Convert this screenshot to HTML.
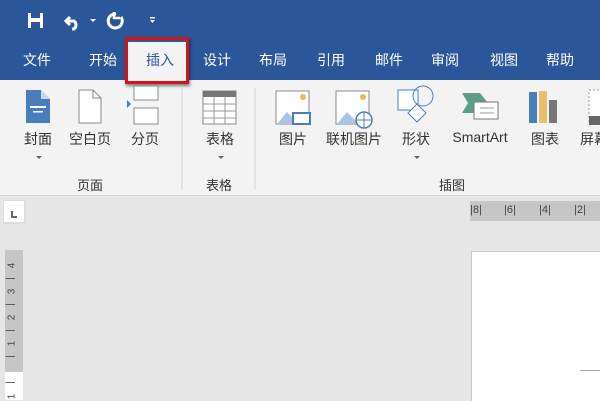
<!DOCTYPE html><html><head><meta charset="utf-8"><style>
body{margin:0;width:600px;height:400px;overflow:hidden;position:relative;background:#e6e6e6;font-family:"Liberation Sans","Noto Sans CJK SC",sans-serif}
.a{position:absolute}
.tab{position:absolute;top:50px;color:#fff;font-size:14px;transform:translateX(-50%);white-space:nowrap}
.lbl{position:absolute;top:129px;font-size:14px;color:#333;transform:translateX(-50%);white-space:nowrap}
.g{position:absolute;top:175px;font-size:13px;color:#333;transform:translateX(-50%)}
.arr{position:absolute;top:156px;width:0;height:0;border-left:3px solid transparent;border-right:3px solid transparent;border-top:3px solid #666;transform:translateX(-50%)}
.rn{position:absolute;font-size:11px;color:#444}
.vn{position:absolute;left:9px;font-size:10px;color:#444;transform:rotate(-90deg)}
</style></head><body>
<div class="a" style="left:0;top:0;width:600px;height:80px;background:#2b579a"></div>
<svg class="a" style="left:0;top:0" width="170" height="40">
<rect x="28" y="13" width="15" height="15" fill="#fff"/><rect x="31" y="13" width="9" height="5" fill="#2b579a"/><rect x="31" y="22" width="9" height="6" fill="#2b579a"/>
<path d="M70 17 l-4 4 l4 4 M66 21 h8 a5 5 0 0 1 0 8 h-2" stroke="#fff" stroke-width="3" fill="none"/>
<path d="M90 19 l3 3 l3-3z" fill="#fff"/>
<path d="M116 14 a7 7 0 1 0 5 3" stroke="#fff" stroke-width="3" fill="none"/><path d="M114 12 v6 h6" stroke="#fff" stroke-width="2.5" fill="none"/>
<rect x="150" y="17" width="5" height="1.5" fill="#fff"/><path d="M150 20 l2.5 3 l2.5-3z" fill="#fff"/>
</svg>
<div class="a" style="left:0;top:80px;width:600px;height:115px;background:#f3f3f3;border-bottom:1px solid #d6d6d6"></div>
<div class="a" style="left:128px;top:42px;width:58px;height:40px;background:#f3f3f3"></div>
<div class="a" style="left:125px;top:37px;width:58px;height:41px;border:3px solid #d3141b;box-shadow:1px 2px 3px rgba(0,0,0,.5)"></div>
<span class="tab" style="left:37px">文件</span><span class="tab" style="left:103px">开始</span><span class="tab" style="left:160px;color:#2b579a">插入</span><span class="tab" style="left:217px">设计</span><span class="tab" style="left:273px">布局</span><span class="tab" style="left:331px">引用</span><span class="tab" style="left:389px">邮件</span><span class="tab" style="left:445px">审阅</span><span class="tab" style="left:504px">视图</span><span class="tab" style="left:560px">帮助</span>
<svg class="a" style="left:0;top:80px" width="600" height="115">
<path d="M26 10 h15 l9 9 v24 h-24z" fill="#4a7ebb"/><path d="M41 10 v9 h9z" fill="#c8d8ec"/><rect x="30" y="26" width="16" height="2" fill="#fff"/><rect x="33" y="31" width="10" height="1.5" fill="#fff"/>
<path d="M79 10 h14 l8 8 v25 h-22z" fill="#fff" stroke="#888"/><path d="M93 10 v8 h8" fill="none" stroke="#888"/>
<rect x="134" y="6" width="24" height="14" fill="#fff" stroke="#888"/><rect x="134" y="28" width="24" height="16" fill="#fff" stroke="#888"/><path d="M127 20 l4 4 l-4 4z" fill="#4a7ebb"/>
<rect x="203" y="11" width="33" height="33" fill="#fff" stroke="#888"/><rect x="203" y="11" width="33" height="6" fill="#777"/>
<path d="M203 24 h33 M203 31 h33 M203 38 h33 M214 17 v27 M225 17 v27" stroke="#999"/>
<line x1="182" y1="8" x2="182" y2="110" stroke="#d4d4d4"/><line x1="255" y1="8" x2="255" y2="110" stroke="#d4d4d4"/>
<rect x="276" y="11" width="33" height="33" fill="#fff" stroke="#888"/><path d="M277 44 l10-12 l8 8 l14 -8 v12z" fill="#a9c4e4"/><circle cx="303" cy="17" r="3" fill="#e8b960"/><rect x="293" y="33" width="17" height="11" fill="#fff" stroke="#4a7ebb" stroke-width="2"/>
<rect x="336" y="11" width="33" height="33" fill="#fff" stroke="#888"/><path d="M337 44 l10-12 l8 8 l14 -8 v12z" fill="#a9c4e4"/><circle cx="363" cy="17" r="3" fill="#e8b960"/><circle cx="364" cy="40" r="8" fill="#fff" stroke="#4a7ebb" stroke-width="1.5"/><path d="M356 40 h16 M364 32 v16" stroke="#4a7ebb"/>
<rect x="398" y="10" width="20" height="20" fill="#fff" stroke="#4a7ebb"/><circle cx="423" cy="16" r="10" fill="none" stroke="#4a7ebb"/><path d="M408 33 l9-9 l9 9 l-9 9z" fill="#fff" stroke="#4a7ebb"/>
<path d="M462 13 h18 l8 10 l-8 10 h-18 l6-10z" fill="#5b9f8a"/><rect x="474" y="22" width="24" height="17" fill="#fff" stroke="#777"/><path d="M480 28 h14 M480 33 h14" stroke="#999"/>
<rect x="529" y="12" width="8" height="31" fill="#4a7ebb"/><rect x="539" y="11" width="8" height="32" fill="#e8c06c"/><rect x="549" y="20" width="8" height="23" fill="#777"/>
<rect x="589" y="10" width="14" height="34" fill="#fff" stroke="#999" stroke-dasharray="2 2"/><rect x="589" y="36" width="12" height="9" fill="#666"/>
</svg>
<span class="lbl" style="left:38px">封面</span><span class="lbl" style="left:90px">空白页</span><span class="lbl" style="left:145px">分页</span><span class="lbl" style="left:220px">表格</span><span class="lbl" style="left:293px">图片</span><span class="lbl" style="left:354px">联机图片</span><span class="lbl" style="left:416px">形状</span><span class="lbl" style="left:480px">SmartArt</span><span class="lbl" style="left:545px">图表</span><span class="lbl" style="left:594px">屏幕</span>
<div class="arr" style="left:39px"></div><div class="arr" style="left:221px"></div><div class="arr" style="left:417px"></div>
<span class="g" style="left:90px">页面</span><span class="g" style="left:219px">表格</span><span class="g" style="left:452px">插图</span>
<div class="a" style="left:3px;top:200px;width:23px;height:24px;background:#dcdcdc"></div>
<div class="a" style="left:4px;top:201px;width:20px;height:21px;background:#fff"></div>
<div class="a" style="left:11px;top:211px;width:2px;height:6px;background:#666"></div><div class="a" style="left:11px;top:216px;width:6px;height:2px;background:#666"></div>
<div class="a" style="left:470px;top:201px;width:130px;height:20px;background:#c6c6c6"></div>
<span class="rn" style="left:470px;top:204px">|8|</span><span class="rn" style="left:504px;top:204px">|6|</span><span class="rn" style="left:539px;top:204px">|4|</span><span class="rn" style="left:574px;top:204px">|2|</span>
<div class="a" style="left:5px;top:250px;width:18px;height:122px;background:#c6c6c6"></div>
<div class="a" style="left:5px;top:372px;width:18px;height:28px;background:#fff"></div>
<span class="vn" style="top:260px">4</span><span class="vn" style="top:273px">|</span><span class="vn" style="top:286px">3</span><span class="vn" style="top:299px">|</span><span class="vn" style="top:312px">2</span><span class="vn" style="top:325px">|</span><span class="vn" style="top:338px">1</span><span class="vn" style="top:351px">|</span><span class="vn" style="top:377px">|</span><span class="vn" style="top:391px">1</span>
<div class="a" style="left:471px;top:251px;width:129px;height:149px;background:#fff;border-left:1px solid #c8c8c8;border-top:1px solid #c8c8c8"></div>
<div class="a" style="left:580px;top:370px;width:20px;height:1px;background:#aaa"></div>
</body></html>
